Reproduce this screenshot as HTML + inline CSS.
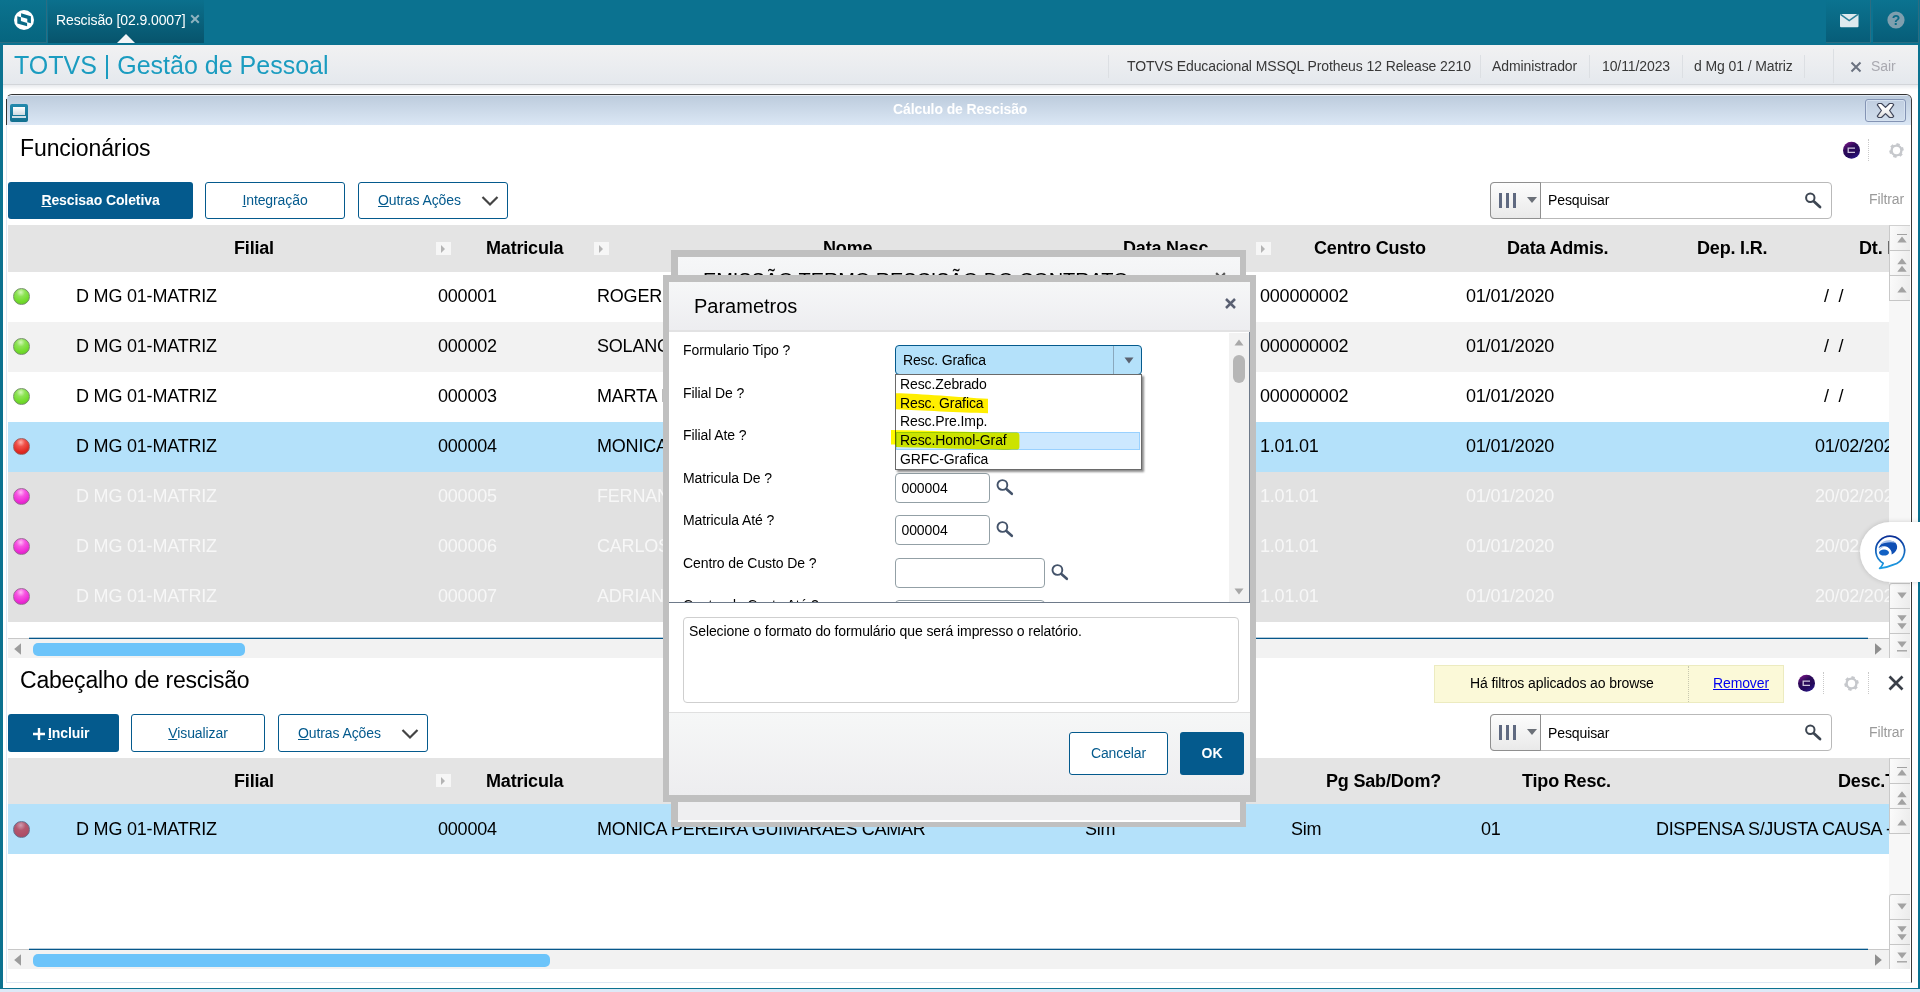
<!DOCTYPE html>
<html><head><meta charset="utf-8">
<style>
*{box-sizing:border-box;margin:0;padding:0}
html,body{width:1920px;height:992px;overflow:hidden;background:#fff;font-family:"Liberation Sans",sans-serif;color:#000}
.a{position:absolute}
.t{position:absolute;white-space:nowrap;line-height:1}
.sep{position:absolute;top:55px;width:1px;height:23px;background:#dcdfe3}
.btn{position:absolute;height:37px;border-radius:3px;font-size:14px;letter-spacing:-0.1px;text-align:center;line-height:35px}
.bp{background:#045a8d;color:#fff;font-weight:bold}
.bs{background:#fff;border:1px solid #045a8d;color:#045a8d}
.th{position:absolute;font-weight:bold;font-size:18px;letter-spacing:-0.18px;white-space:nowrap;line-height:1}
.row{position:absolute;left:8px;width:1881px;height:50px}
.c{position:absolute;font-size:18px;letter-spacing:-0.2px;white-space:nowrap;line-height:1;top:15px}
.mk{width:15px;height:13px;background:#f6f6f6}
.mk:after{content:"";position:absolute;left:5px;top:3px;border-left:4px solid #b4b4b4;border-top:4px solid transparent;border-bottom:4px solid transparent}
.dot{position:absolute;left:4.5px;top:16px;width:17px;height:17px;border-radius:9px}
.dot.g{background:radial-gradient(circle at 45% 22%,#d4f7b8 0,#8ee356 30%,#72dc2c 65%,#5fc222 100%);border:1px solid #74906a}
.dot.r{background:radial-gradient(circle at 45% 22%,#ffb0a8 0,#f0524a 30%,#e22c24 65%,#c01812 100%);border:1px solid #9a6060}
.dot.m{background:radial-gradient(circle at 45% 22%,#ffb8f5 0,#f755e2 30%,#ee2cd6 65%,#cc14b6 100%);border:1px solid #9a6a96}
.dot.d{background:radial-gradient(circle at 45% 22%,#cf9cb0 0,#b4586e 35%,#ae4e66 70%,#a04660 100%);border:1px solid #64708e}
.row.w .c{color:#f7f7f7}
.row.r2 .c{top:16px}
.row.r2 .dot{top:17px}
.sb{width:21px;height:25px;background:linear-gradient(100deg,#fbfbfb,#ebebeb);border-left:1px solid #c9c9c9;border-bottom:1px solid #c6c6c6}
.sb svg{position:absolute;left:7px}
.l{font-size:14px;letter-spacing:-0.1px}
.d{font-size:14px;letter-spacing:-0.1px}
.fld{height:30px;border:1px solid #93a0a6;border-radius:4px;background:#fff;font-size:14px;letter-spacing:-0.1px}
.fld span{position:absolute;left:5.5px;top:7px;line-height:1}
</style></head><body>
<div class="a" style="left:0;top:0;width:1920px;height:45px;background:#0b7290"></div>
<div class="a" style="left:0;top:45px;width:3px;height:944px;background:#0b7290"></div>
<div class="a" style="left:1918px;top:45px;width:2px;height:944px;background:#0b7290"></div>
<div class="a" style="left:0;top:988px;width:1920px;height:1px;background:#0b7290"></div>
<div class="a" style="left:0;top:989px;width:1920px;height:3px;background:#dde9f7"></div>
<div class="a" style="left:0;top:0;width:47px;height:43px;background:linear-gradient(#0b738f,#06657f);border-right:1px solid #2b6d82;border-bottom:1px solid #2b6d82"></div>
<svg class="a" style="left:12px;top:8px" width="24" height="24" viewBox="12 8 24 24"><circle cx="24" cy="20" r="10" fill="#fff"/><path d="M21.1 13.3 L30.9 16.2 L30.9 23.3 L27.3 22.2 L27.3 18.7 L21.1 16.9 Z M17.3 16.2 L20.9 17.3 L20.9 21.1 L27.1 22.9 L27.1 26.2 L17.3 23.6 Z" fill="#0a6a86"/></svg>
<div class="a" style="left:48px;top:0;width:156px;height:43px;background:linear-gradient(#0b708d,#07546c)"></div>
<div class="t" style="left:56px;top:13px;font-size:14px;letter-spacing:-0.1px;color:#fff">Rescisão [02.9.0007]</div>
<svg class="a" style="left:190px;top:14px" width="10" height="10" viewBox="0 0 10 10"><path d="M1.2 1.2 L8.8 8.8 M8.8 1.2 L1.2 8.8" stroke="#8db2bf" stroke-width="2"/></svg>
<svg class="a" style="left:117px;top:34px" width="18" height="9" viewBox="0 0 18 9"><path d="M0 9 L9 0 L18 9 Z" fill="#f3f5f7"/></svg>
<div class="a" style="left:1826px;top:0;width:45px;height:43px;background:linear-gradient(#0b7390,#075d78);border-right:1px solid #2b6d82;border-bottom:1px solid #2b6d82"></div>
<div class="a" style="left:1873px;top:0;width:46px;height:43px;background:linear-gradient(#0b7390,#075d78);border-right:1px solid #2b6d82;border-bottom:1px solid #2b6d82"></div>
<svg class="a" style="left:1840px;top:14px" width="19" height="14" viewBox="0 0 19 14"><rect x="0" y="0" width="18.5" height="13.2" rx="1" fill="#dfe9ee"/><path d="M0.5 0.3 L9.2 6.6 L18 0.3" fill="none" stroke="#2d8199" stroke-width="1.5"/></svg>
<svg class="a" style="left:1887px;top:11px" width="18" height="18" viewBox="0 0 18 18"><circle cx="9" cy="9" r="8.6" fill="#7f9fae"/><text x="9" y="14" font-family="Liberation Sans" font-weight="bold" font-size="14" fill="#0a6a86" text-anchor="middle">?</text></svg>
<div class="a" style="left:3px;top:45px;width:1915px;height:40px;background:linear-gradient(#f1f1f2,#ebedf0 50%,#e4e8ed)"></div>
<div class="a" style="left:3px;top:84px;width:1915px;height:1px;background:#d2d5d9"></div>
<div class="a" style="left:3px;top:85px;width:1915px;height:5px;background:linear-gradient(#e9ebee,#fff)"></div>
<div class="t" style="left:14px;top:53px;font-size:25px;color:#1b9cc0">TOTVS | Gestão de Pessoal</div>
<div class="sep" style="left:1108px"></div>
<div class="sep" style="left:1480px"></div>
<div class="sep" style="left:1589px"></div>
<div class="sep" style="left:1682px"></div>
<div class="sep" style="left:1804px"></div>
<div class="sep" style="left:1833px;top:49px;height:34px"></div>
<div class="t" style="left:1127px;top:59px;font-size:14px;letter-spacing:-0.1px;color:#383838">TOTVS Educacional MSSQL Protheus 12 Release 2210</div>
<div class="t" style="left:1492px;top:59px;font-size:14px;letter-spacing:-0.1px;color:#383838">Administrador</div>
<div class="t" style="left:1602px;top:59px;font-size:14px;letter-spacing:-0.1px;color:#383838">10/11/2023</div>
<div class="t" style="left:1694px;top:59px;font-size:14px;letter-spacing:-0.1px;color:#383838">d Mg 01 / Matriz</div>
<svg class="a" style="left:1850px;top:61px" width="12" height="12" viewBox="0 0 12 12"><path d="M1.5 1.5 L10.5 10.5 M10.5 1.5 L1.5 10.5" stroke="#6b7280" stroke-width="2"/></svg>
<div class="t" style="left:1871px;top:59px;font-size:14px;letter-spacing:-0.1px;color:#a9a9b0">Sair</div>
<div class="a" style="left:6px;top:94px;width:1906px;height:889px;background:#fff;border:1px solid #dde8f5;border-top-color:#333;border-right-color:#3a3a3a;border-radius:6px 6px 0 0"></div>
<div class="a" style="left:7px;top:95px;width:1904px;height:30px;background:linear-gradient(#bccbdc,#dbe7f5);border-radius:5px 5px 0 0"></div>
<div class="a" style="left:11px;top:95px;width:1896px;height:1px;background:#e2e9f3"></div>
<div class="a" style="left:6px;top:99px;width:1px;height:26px;background:#333"></div>
<div class="a" style="left:10px;top:104px;width:18px;height:18px;background:linear-gradient(#2389ad,#12708f);border-radius:2px"></div>
<div class="a" style="left:13px;top:107px;width:12px;height:8px;background:linear-gradient(#fff,#cfdbe2)"></div>
<div class="a" style="left:12px;top:116px;width:14px;height:2px;background:#cfe0e8"></div>
<div class="t" style="left:893px;top:102px;font-size:14px;letter-spacing:-0.1px;font-weight:bold;color:#fff">Cálculo de Rescisão</div>
<div class="a" style="left:1865px;top:99px;width:41px;height:23px;border:1px solid #8494b4;border-radius:3px;background:linear-gradient(#c0cee0,#d0ddec);box-shadow:inset 0 0 0 1px #d6e2f0"></div>
<svg class="a" style="left:1860px;top:95px" width="52" height="32" viewBox="0 0 52 32"><defs><linearGradient id="xg" x1="0" y1="0" x2="0" y2="1"><stop offset="0.3" stop-color="#fff"/><stop offset="1" stop-color="#dcdcdc"/></linearGradient></defs><path d="M17.3 9.8 L18.3 8.5 L21.5 8.5 L25.5 12.4 L29.5 8.5 L32.7 8.5 L33.7 9.8 L29.6 15.5 L33.7 21.2 L32.7 22.5 L29.5 22.5 L25.5 18.6 L21.5 22.5 L18.3 22.5 L17.3 21.2 L21.4 15.5 Z" fill="url(#xg)" stroke="#40465a" stroke-width="1.2" stroke-linejoin="round"/></svg>
<svg width="0" height="0" style="position:absolute"><defs><g id="mag"><circle cx="6.4" cy="6" r="4.9" fill="#fff" stroke="#44536a" stroke-width="1.9"/><path d="M10.4 10 L15.8 14.8" stroke="#44536a" stroke-width="2.6" stroke-linecap="round"/></g><g id="mag2"><circle cx="6.3" cy="5.8" r="4.2" fill="none" stroke="#3d4652" stroke-width="2"/><path d="M10 9.5 L16 15" stroke="#3d4652" stroke-width="2.8" stroke-linecap="round"/></g></defs></svg>
<div class="t" style="left:20px;top:137px;font-size:23px;letter-spacing:-0.1px">Funcionários</div>
<div class="btn bp" style="left:8px;top:182px;width:185px;line-height:37px"><u>R</u>escisao Coletiva</div>
<div class="btn bs" style="left:205px;top:182px;width:140px"><u>I</u>ntegração</div>
<div class="btn bs" style="left:358px;top:182px;width:150px;text-align:left;padding-left:19px"><u>O</u>utras Ações</div>
<svg class="a" style="left:481px;top:195px" width="18" height="12" viewBox="0 0 18 12"><path d="M1.5 2 L9 9.5 L16.5 2" fill="none" stroke="#444" stroke-width="2.2"/></svg>
<div class="a" style="left:1490px;top:182px;width:342px;height:37px;border:1px solid #b9b9b9;border-radius:4px;background:#fff"></div>
<div class="a" style="left:1490px;top:182px;width:51px;height:37px;border:1px solid #8f8f8f;border-radius:4px 0 0 4px;background:linear-gradient(#fdfdfd,#e9e9e9)"></div>
<div class="a" style="left:1499px;top:193px;width:3px;height:15px;background:#5f6980"></div>
<div class="a" style="left:1506px;top:193px;width:3px;height:15px;background:#5f6980"></div>
<div class="a" style="left:1513px;top:193px;width:3px;height:15px;background:#5f6980"></div>
<svg class="a" style="left:1527px;top:197px" width="10" height="6" viewBox="0 0 10 6"><path d="M0 0 L10 0 L5 6 Z" fill="#6b7078"/></svg>
<div class="t" style="left:1548px;top:193px;font-size:14px;letter-spacing:-0.1px">Pesquisar</div>
<svg class="a" style="left:1804px;top:192px" width="18" height="17" viewBox="0 0 18 17"><use href="#mag2"/></svg>
<div class="t" style="left:1869px;top:192px;font-size:14px;letter-spacing:-0.1px;color:#9a9a9a">Filtrar</div>
<svg class="a" style="left:1842px;top:141px" width="19" height="19" viewBox="0 0 19 19"><defs><linearGradient id="pg1842141" x1="0.2" y1="0" x2="0.8" y2="1"><stop offset="0" stop-color="#7a1688"/><stop offset="0.35" stop-color="#2c0a58"/><stop offset="0.7" stop-color="#240a5c"/><stop offset="1" stop-color="#2c1a96"/></linearGradient></defs><circle cx="9.5" cy="9.3" r="8.5" fill="url(#pg1842141)"/><path d="M13 7.2 H6.2 V11.4 H13" fill="none" stroke="#cdc4dc" stroke-width="1.3"/></svg>
<div class="a" style="left:1868px;top:139px;width:0;height:22px;border-left:1px dotted #c9c9c9"></div>
<svg class="a" style="left:1887px;top:141px" width="19" height="19" viewBox="0 0 19 19"><circle cx="9.5" cy="9.5" r="4.9" fill="none" stroke="#c6c8cc" stroke-width="2.4"/><path d="M10.69 5.06 L11.36 2.55 M13.94 8.31 L16.45 7.64 M12.75 12.75 L14.59 14.59 M8.31 13.94 L7.64 16.45 M5.06 10.69 L2.55 11.36 M6.25 6.25 L4.41 4.41 " stroke="#c6c8cc" stroke-width="3.4"/></svg>
<div class="a" style="left:8px;top:225px;width:1881px;height:47px;background:#e4e4e4"></div>
<div class="th" style="left:234px;top:239px">Filial</div>
<div class="th" style="left:486px;top:239px">Matricula</div>
<div class="th" style="left:823px;top:239px">Nome</div>
<div class="th" style="left:1123px;top:239px">Data Nasc.</div>
<div class="th" style="left:1314px;top:239px">Centro Custo</div>
<div class="th" style="left:1507px;top:239px">Data Admis.</div>
<div class="th" style="left:1697px;top:239px">Dep. I.R.</div>
<div class="th" style="left:1859px;top:239px;width:30px;overflow:hidden">Dt. I</div>
<div class="a mk" style="left:436px;top:242px"></div>
<div class="a mk" style="left:594px;top:242px"></div>
<div class="a mk" style="left:1256px;top:242px"></div>
<div class="row" style="top:272px;background:#fff"><i class="dot g"></i><span class="c" style="left:68px">D MG 01-MATRIZ</span><span class="c" style="left:430px">000001</span><span class="c" style="left:589px">ROGER</span><span class="c" style="left:1252px">000000002</span><span class="c" style="left:1458px">01/01/2020</span><span class="c" style="left:1816px;width:65px;overflow:hidden">/&nbsp; /</span></div>
<div class="row" style="top:322px;background:#f2f2f2"><i class="dot g"></i><span class="c" style="left:68px">D MG 01-MATRIZ</span><span class="c" style="left:430px">000002</span><span class="c" style="left:589px">SOLANG</span><span class="c" style="left:1252px">000000002</span><span class="c" style="left:1458px">01/01/2020</span><span class="c" style="left:1816px;width:65px;overflow:hidden">/&nbsp; /</span></div>
<div class="row" style="top:372px;background:#fff"><i class="dot g"></i><span class="c" style="left:68px">D MG 01-MATRIZ</span><span class="c" style="left:430px">000003</span><span class="c" style="left:589px">MARTA R</span><span class="c" style="left:1252px">000000002</span><span class="c" style="left:1458px">01/01/2020</span><span class="c" style="left:1816px;width:65px;overflow:hidden">/&nbsp; /</span></div>
<div class="row" style="top:422px;background:#b4e1fa"><i class="dot r"></i><span class="c" style="left:68px">D MG 01-MATRIZ</span><span class="c" style="left:430px">000004</span><span class="c" style="left:589px">MONICA</span><span class="c" style="left:1252px">1.01.01</span><span class="c" style="left:1458px">01/01/2020</span><span class="c" style="left:1807px;width:74px;overflow:hidden">01/02/2021</span></div>
<div class="row w" style="top:472px;background:#e1e1e1"><i class="dot m"></i><span class="c" style="left:68px">D MG 01-MATRIZ</span><span class="c" style="left:430px">000005</span><span class="c" style="left:589px">FERNAN</span><span class="c" style="left:1252px">1.01.01</span><span class="c" style="left:1458px">01/01/2020</span><span class="c" style="left:1807px;width:74px;overflow:hidden">20/02/2021</span></div>
<div class="row w" style="top:522px;background:#e1e1e1"><i class="dot m"></i><span class="c" style="left:68px">D MG 01-MATRIZ</span><span class="c" style="left:430px">000006</span><span class="c" style="left:589px">CARLOS</span><span class="c" style="left:1252px">1.01.01</span><span class="c" style="left:1458px">01/01/2020</span><span class="c" style="left:1807px;width:74px;overflow:hidden">20/02/2021</span></div>
<div class="row w" style="top:572px;background:#e1e1e1"><i class="dot m"></i><span class="c" style="left:68px">D MG 01-MATRIZ</span><span class="c" style="left:430px">000007</span><span class="c" style="left:589px">ADRIAN</span><span class="c" style="left:1252px">1.01.01</span><span class="c" style="left:1458px">01/01/2020</span><span class="c" style="left:1807px;width:74px;overflow:hidden">20/02/2021</span></div>
<div class="a" style="left:1889px;top:225px;width:21px;height:433px;background:#f7f7f7"></div>
<div class="a sb" style="left:1889px;top:225px;height:26px;border-top:1px solid #d0d0d0"><svg style="top:8px" width="10" height="9" viewBox="0 0 10 9"><path d="M0 0.5 H10" stroke="#a2a2a2" stroke-width="1"/><path d="M0.3 8.5 L5 2.5 L9.7 8.5 Z" fill="#a2a2a2"/></svg></div>
<div class="a sb" style="left:1889px;top:251px"><svg style="top:7px" width="10" height="14" viewBox="0 0 10 14"><path d="M0.3 6.3 L5 0.3 L9.7 6.3 Z M0.3 13.7 L5 7.7 L9.7 13.7 Z" fill="#a2a2a2"/></svg></div>
<div class="a sb" style="left:1889px;top:276px"><svg style="top:10px" width="10" height="7" viewBox="0 0 10 7"><path d="M0.3 6.5 L5 0.5 L9.7 6.5 Z" fill="#a2a2a2"/></svg></div>
<div class="a sb" style="left:1889px;top:583px;height:26px;border-top:1px solid #c6c6c6;border-radius:3px 0 0 0"><svg style="top:8px" width="10" height="7" viewBox="0 0 10 7"><path d="M0.3 0.5 L5 6.5 L9.7 0.5 Z" fill="#a2a2a2"/></svg></div>
<div class="a sb" style="left:1889px;top:609px"><svg style="top:6px" width="10" height="15" viewBox="0 0 10 15"><path d="M0.3 0.3 L5 6.3 L9.7 0.3 Z M0.3 8.3 L5 14.3 L9.7 8.3 Z" fill="#a2a2a2"/></svg></div>
<div class="a sb" style="left:1889px;top:634px;height:24px;border-bottom:none"><svg style="top:7px" width="10" height="11" viewBox="0 0 10 11"><path d="M0.3 0.5 L5 6.5 L9.7 0.5 Z" fill="#a2a2a2"/><path d="M0 9.8 H10" stroke="#a2a2a2" stroke-width="1.4"/></svg></div>
<div class="a" style="left:8px;top:638px;width:1881px;height:1px;background:#c8c8c8"></div>
<div class="a" style="left:8px;top:639px;width:1881px;height:19px;background:#f2f2f2"></div>
<div class="a" style="left:29px;top:637px;width:1839px;height:1px;background:rgba(7,87,138,.3)"></div>
<div class="a" style="left:29px;top:638px;width:1839px;height:1px;background:#07578a"></div>
<div class="a" style="left:33px;top:643px;width:212px;height:13px;border-radius:5px;background:#6cc4fa"></div>
<svg class="a" style="left:14px;top:643px" width="7" height="12" viewBox="0 0 7 12"><path d="M7 0.2 L0.2 6 L7 11.8 Z" fill="#9c9c9c"/></svg>
<svg class="a" style="left:1875px;top:643px" width="7" height="12" viewBox="0 0 7 12"><path d="M0 0.2 L6.8 6 L0 11.8 Z" fill="#8f8f8f"/></svg>
<div class="a" style="left:1860px;top:522px;width:70px;height:60px;border-radius:30px 0 0 30px;background:#fff;box-shadow:0 0 5px rgba(0,0,0,.16)"></div>
<svg class="a" style="left:1872px;top:533px" width="36" height="38" viewBox="1872 533 36 38"><defs><linearGradient id="cg" x1="0" y1="0" x2="0" y2="1"><stop offset="0" stop-color="#0b2f96"/><stop offset="1" stop-color="#1da0e6"/></linearGradient></defs><path d="M1883.2 563.2 A14.4 14.4 0 1 1 1893.6 564.6 C1889 566.6 1884 568 1879.6 568.4 C1881.4 566.8 1882.6 565 1883.2 563.2 Z" fill="#fff" stroke="url(#cg)" stroke-width="1.7" stroke-linejoin="round"/><g transform="translate(0,1.8)"><path d="M1878.5 546.5 C1881 540.5 1888 537.6 1893.5 539.6 C1896.6 541 1897.6 544 1897 546.6 C1896 550 1893.4 552 1891.6 552.6 C1892.4 548.6 1888.6 544.6 1884.6 544.4 C1882 544.4 1880 545.2 1878.5 546.5 Z" fill="#0f4fb4"/><path d="M1879.5 543 C1883 538 1891 536.6 1896 541 C1891 539.6 1884 540.6 1879.5 543 Z" fill="#a9c2ea"/></g><ellipse cx="1884" cy="552.6" rx="5" ry="3" fill="#1261c4"/><path d="M1878.6 551 C1879 548 1882 546 1885 546.4 C1882 547 1880 548.6 1878.6 551 Z" fill="#a9c4ea"/></svg>
<div class="t" style="left:20px;top:669px;font-size:23px;letter-spacing:-0.22px">Cabeçalho de rescisão</div>
<div class="btn bp" style="left:8px;top:714px;width:111px;height:38px;line-height:39px;text-align:left;padding-left:40px"><u>I</u>ncluir</div>
<svg class="a" style="left:32px;top:727px" width="14" height="14" viewBox="0 0 14 14"><path d="M7 1 V13 M1 7 H13" stroke="#fff" stroke-width="2.4"/></svg>
<div class="btn bs" style="left:131px;top:714px;width:134px;height:38px;line-height:37px"><u>V</u>isualizar</div>
<div class="btn bs" style="left:278px;top:714px;width:150px;height:38px;line-height:37px;text-align:left;padding-left:19px"><u>O</u>utras Ações</div>
<svg class="a" style="left:401px;top:728px" width="18" height="12" viewBox="0 0 18 12"><path d="M1.5 2 L9 9.5 L16.5 2" fill="none" stroke="#444" stroke-width="2.2"/></svg>
<div class="a" style="left:1434px;top:665px;width:350px;height:38px;background:#fbf9d8;border:1px solid #ecebc0"></div>
<div class="a" style="left:1688px;top:666px;width:0;height:36px;border-left:1px dotted #c8c8b0"></div>
<div class="t" style="left:1470px;top:676px;font-size:14px;letter-spacing:-0.1px">Há filtros aplicados ao browse</div>
<div class="t" style="left:1713px;top:676px;font-size:14px;letter-spacing:-0.12px;color:#0000ee;text-decoration:underline">Remover</div>
<svg class="a" style="left:1797px;top:674px" width="19" height="19" viewBox="0 0 19 19"><defs><linearGradient id="pg1797674" x1="0.2" y1="0" x2="0.8" y2="1"><stop offset="0" stop-color="#7a1688"/><stop offset="0.35" stop-color="#2c0a58"/><stop offset="0.7" stop-color="#240a5c"/><stop offset="1" stop-color="#2c1a96"/></linearGradient></defs><circle cx="9.5" cy="9.3" r="8.5" fill="url(#pg1797674)"/><path d="M13 7.2 H6.2 V11.4 H13" fill="none" stroke="#cdc4dc" stroke-width="1.3"/></svg>
<div class="a" style="left:1823px;top:672px;width:0;height:22px;border-left:1px dotted #c9c9c9"></div>
<svg class="a" style="left:1842px;top:674px" width="19" height="19" viewBox="0 0 19 19"><circle cx="9.5" cy="9.5" r="4.9" fill="none" stroke="#c6c8cc" stroke-width="2.4"/><path d="M10.69 5.06 L11.36 2.55 M13.94 8.31 L16.45 7.64 M12.75 12.75 L14.59 14.59 M8.31 13.94 L7.64 16.45 M5.06 10.69 L2.55 11.36 M6.25 6.25 L4.41 4.41 " stroke="#c6c8cc" stroke-width="3.4"/></svg>
<div class="a" style="left:1868px;top:672px;width:0;height:22px;border-left:1px dotted #c9c9c9"></div>
<svg class="a" style="left:1888px;top:675px" width="16" height="16" viewBox="0 0 16 16"><path d="M1.5 1.5 L14.5 14.5 M14.5 1.5 L1.5 14.5" stroke="#3a3f48" stroke-width="2.7"/></svg>
<div class="a" style="left:1490px;top:714px;width:342px;height:37px;border:1px solid #b9b9b9;border-radius:4px;background:#fff"></div>
<div class="a" style="left:1490px;top:714px;width:51px;height:37px;border:1px solid #8f8f8f;border-radius:4px 0 0 4px;background:linear-gradient(#fdfdfd,#e9e9e9)"></div>
<div class="a" style="left:1499px;top:725px;width:3px;height:15px;background:#5f6980"></div>
<div class="a" style="left:1506px;top:725px;width:3px;height:15px;background:#5f6980"></div>
<div class="a" style="left:1513px;top:725px;width:3px;height:15px;background:#5f6980"></div>
<svg class="a" style="left:1527px;top:729px" width="10" height="6" viewBox="0 0 10 6"><path d="M0 0 L10 0 L5 6 Z" fill="#6b7078"/></svg>
<div class="t" style="left:1548px;top:726px;font-size:14px;letter-spacing:-0.1px">Pesquisar</div>
<svg class="a" style="left:1804px;top:724px" width="18" height="17" viewBox="0 0 18 17"><use href="#mag2"/></svg>
<div class="t" style="left:1869px;top:725px;font-size:14px;letter-spacing:-0.1px;color:#9a9a9a">Filtrar</div>
<div class="a" style="left:8px;top:758px;width:1881px;height:46px;background:#e4e4e4"></div>
<div class="th" style="left:234px;top:772px">Filial</div>
<div class="th" style="left:486px;top:772px">Matricula</div>
<div class="th" style="left:1326px;top:772px">Pg Sab/Dom?</div>
<div class="th" style="left:1522px;top:772px">Tipo Resc.</div>
<div class="th" style="left:1838px;top:772px;width:51px;overflow:hidden">Desc.T</div>
<div class="a mk" style="left:436px;top:774px"></div>
<div class="row r2" style="top:804px;background:#b4e1fa"><i class="dot d"></i><span class="c" style="left:68px">D MG 01-MATRIZ</span><span class="c" style="left:430px">000004</span><span class="c" style="left:589px;letter-spacing:-0.29px">MONICA PEREIRA GUIMARAES CAMAR</span><span class="c" style="left:1077px">Sim</span><span class="c" style="left:1283px">Sim</span><span class="c" style="left:1473px">01</span><span class="c" style="left:1648px;width:233px;overflow:hidden;letter-spacing:-0.34px">DISPENSA S/JUSTA CAUSA -</span></div>
<div class="a" style="left:1889px;top:758px;width:21px;height:211px;background:#f7f7f7"></div>
<div class="a sb" style="left:1889px;top:758px;height:26px;border-top:1px solid #d0d0d0"><svg style="top:8px" width="10" height="9" viewBox="0 0 10 9"><path d="M0 0.5 H10" stroke="#a2a2a2" stroke-width="1"/><path d="M0.3 8.5 L5 2.5 L9.7 8.5 Z" fill="#a2a2a2"/></svg></div>
<div class="a sb" style="left:1889px;top:784px"><svg style="top:7px" width="10" height="14" viewBox="0 0 10 14"><path d="M0.3 6.3 L5 0.3 L9.7 6.3 Z M0.3 13.7 L5 7.7 L9.7 13.7 Z" fill="#a2a2a2"/></svg></div>
<div class="a sb" style="left:1889px;top:809px"><svg style="top:10px" width="10" height="7" viewBox="0 0 10 7"><path d="M0.3 6.5 L5 0.5 L9.7 6.5 Z" fill="#a2a2a2"/></svg></div>
<div class="a sb" style="left:1889px;top:894px;height:26px;border-top:1px solid #c6c6c6;border-radius:3px 0 0 0"><svg style="top:8px" width="10" height="7" viewBox="0 0 10 7"><path d="M0.3 0.5 L5 6.5 L9.7 0.5 Z" fill="#a2a2a2"/></svg></div>
<div class="a sb" style="left:1889px;top:920px"><svg style="top:6px" width="10" height="15" viewBox="0 0 10 15"><path d="M0.3 0.3 L5 6.3 L9.7 0.3 Z M0.3 8.3 L5 14.3 L9.7 8.3 Z" fill="#a2a2a2"/></svg></div>
<div class="a sb" style="left:1889px;top:945px;height:24px;border-bottom:none"><svg style="top:7px" width="10" height="11" viewBox="0 0 10 11"><path d="M0.3 0.5 L5 6.5 L9.7 0.5 Z" fill="#a2a2a2"/><path d="M0 9.8 H10" stroke="#a2a2a2" stroke-width="1.4"/></svg></div>
<div class="a" style="left:8px;top:949px;width:1881px;height:1px;background:#c8c8c8"></div>
<div class="a" style="left:8px;top:950px;width:1881px;height:19px;background:#f2f2f2"></div>
<div class="a" style="left:29px;top:948px;width:1839px;height:1px;background:rgba(7,87,138,.3)"></div>
<div class="a" style="left:29px;top:949px;width:1839px;height:1px;background:#07578a"></div>
<div class="a" style="left:33px;top:954px;width:517px;height:13px;border-radius:5px;background:#6cc4fa"></div>
<svg class="a" style="left:14px;top:954px" width="7" height="12" viewBox="0 0 7 12"><path d="M7 0.2 L0.2 6 L7 11.8 Z" fill="#9c9c9c"/></svg>
<svg class="a" style="left:1875px;top:954px" width="7" height="12" viewBox="0 0 7 12"><path d="M0 0.2 L6.8 6 L0 11.8 Z" fill="#8f8f8f"/></svg>
<!-- back dialog -->
<div class="a" style="left:671px;top:250px;width:575px;height:577px;background:#c0c0c0"></div>
<div class="a" style="left:678px;top:257px;width:562px;height:565px;background:linear-gradient(#f6f7f8 0,#eeeff1 50px,#efeff1 100%);border-bottom:2px solid #fff"></div>
<div class="a" style="left:678px;top:257px;width:562px;height:18px;overflow:hidden"><div class="t" style="left:25px;top:12.5px;font-size:20px;letter-spacing:-0.1px">EMISSÃO TERMO RESCISÃO DO CONTRATO</div><svg class="a" style="left:537px;top:14.5px" width="11" height="11" viewBox="0 0 10 10"><path d="M1 1 L9 9 M9 1 L1 9" stroke="#555" stroke-width="2"/></svg></div>
<!-- front dialog -->
<div class="a" style="left:663px;top:275px;width:593px;height:527px;background:#c0c0c0"></div>
<div class="a" style="left:669px;top:282px;width:581px;height:513px;background:#fff"></div>
<div class="a" style="left:669px;top:282px;width:581px;height:50px;background:linear-gradient(#f6f7f8,#ededf0);border-bottom:2px solid #e2e2e3"></div>
<div class="t" style="left:694px;top:296px;font-size:20px">Parametros</div>
<svg class="a" style="left:1225px;top:298px" width="11" height="11" viewBox="0 0 11 11"><path d="M1 1 L10 10 M10 1 L1 10" stroke="#5a6072" stroke-width="2.5"/></svg>
<!-- labels -->
<div class="t l" style="left:683px;top:343px">Formulario Tipo ?</div>
<div class="t l" style="left:683px;top:386px">Filial De ?</div>
<div class="t l" style="left:683px;top:428px">Filial Ate ?</div>
<div class="t l" style="left:683px;top:471px">Matricula De ?</div>
<div class="t l" style="left:683px;top:513px">Matricula Até ?</div>
<div class="t l" style="left:683px;top:556px">Centro de Custo De ?</div>
<div class="a" style="left:669px;top:596px;width:561px;height:6px;overflow:hidden"><div class="t l" style="left:14px;top:2px">Centro de Custo Até ?</div><div class="a" style="left:226px;top:4px;width:150px;height:30px;border:1px solid #93a0a6;border-radius:4px"></div></div>
<!-- fields -->
<div class="a fld" style="left:895px;top:473px;width:95px"><span>000004</span></div>
<div class="a fld" style="left:895px;top:515px;width:95px"><span>000004</span></div>
<div class="a fld" style="left:895px;top:558px;width:150px"></div>
<svg class="a mg" style="left:996px;top:479px" width="18" height="17" viewBox="0 0 18 17"><use href="#mag"/></svg>
<svg class="a mg" style="left:996px;top:521px" width="18" height="17" viewBox="0 0 18 17"><use href="#mag"/></svg>
<svg class="a mg" style="left:1051px;top:564px" width="18" height="17" viewBox="0 0 18 17"><use href="#mag"/></svg>
<svg width="0" height="0" style="position:absolute"><defs><g id="mag"><circle cx="6.2" cy="6" r="4.3" fill="#fff" stroke="#3d4a5c" stroke-width="2"/><path d="M9.8 9.6 L15.5 15" stroke="#3d4a5c" stroke-width="2.8" stroke-linecap="round"/></g></defs></svg>
<!-- combo -->
<div class="a" style="left:895px;top:345px;width:247px;height:30px;background:#b4e1fa;border:1px solid #045a8d;border-radius:4px"></div>
<div class="a" style="left:1113px;top:346px;width:1px;height:28px;background:#8aa8bd"></div>
<div class="t" style="left:903px;top:353px;font-size:14px;letter-spacing:-0.15px">Resc. Grafica</div>
<svg class="a" style="left:1124px;top:357px" width="10" height="7" viewBox="0 0 10 7"><path d="M0.5 0.5 L9.5 0.5 L5 6.5 Z" fill="#5a6270"/></svg>
<!-- dropdown -->
<div class="a" style="left:895px;top:374px;width:247px;height:96px;background:#fff;border:1px solid #6a6a6a;box-shadow:2px 2px 2px rgba(0,0,0,.45)"></div>
<div class="a" style="left:896px;top:432px;width:244px;height:18px;background:#cce8ff;border:1px solid #99d1ff"></div>

<svg class="a" style="left:890px;top:390px;mix-blend-mode:multiply" width="135" height="65" viewBox="890 390 135 65"><path d="M896 393.2 C920 393.6 960 397.2 988 398.8 L988 413.2 C960 412.6 920 410.2 896 409.2 Z" fill="#ffee00"/><path d="M891 430 C930 430.6 980 432.8 1017 432.4 Q1019.4 432.6 1019.4 435 L1019.4 447 Q1019.4 449.6 1016 449.6 C990 450 940 448.2 896 447 L895.5 444.6 L891 444.4 Z" fill="#fffa00"/></svg>
<div class="t d" style="left:900px;top:377px">Resc.Zebrado</div>
<div class="t d" style="left:900px;top:396px">Resc. Grafica</div>
<div class="t d" style="left:900px;top:414px">Resc.Pre.Imp.</div>
<div class="t d" style="left:900px;top:433px">Resc.Homol-Graf</div>
<div class="t d" style="left:900px;top:452px">GRFC-Grafica</div>
<!-- dialog scrollbar -->
<div class="a" style="left:1229px;top:333px;width:20px;height:269px;background:#f2f2f2"></div><div class="a" style="left:1249px;top:332px;width:1px;height:271px;background:#6e7a8a"></div>
<svg class="a" style="left:1234px;top:339px" width="10" height="7" viewBox="0 0 10 7"><path d="M0.5 6.5 L5 0.5 L9.5 6.5 Z" fill="#a8a8a8"/></svg>
<svg class="a" style="left:1234px;top:588px" width="10" height="7" viewBox="0 0 10 7"><path d="M0.5 0.5 L5 6.5 L9.5 0.5 Z" fill="#a8a8a8"/></svg>
<div class="a" style="left:1233px;top:355px;width:12px;height:28px;border-radius:6px;background:#b6b6b6"></div>
<div class="a" style="left:669px;top:602px;width:581px;height:1px;background:#6e7a8a"></div>
<!-- help text -->
<div class="a" style="left:683px;top:617px;width:556px;height:86px;border:1px solid #cfcfcf;border-radius:4px;background:#fff"></div>
<div class="t" style="left:689px;top:624px;font-size:14px;letter-spacing:-0.1px">Selecione o formato do formulário que será impresso o relatório.</div>
<!-- footer -->
<div class="a" style="left:669px;top:712px;width:581px;height:83px;background:linear-gradient(#f6f7f7,#ededef);border-top:1px solid #e0e0e0"></div>
<div class="btn bs" style="left:1069px;top:732px;width:99px;height:43px;line-height:41px">Cancelar</div>
<div class="btn bp" style="left:1180px;top:732px;width:64px;height:43px;line-height:43px">OK</div>

</body></html>
